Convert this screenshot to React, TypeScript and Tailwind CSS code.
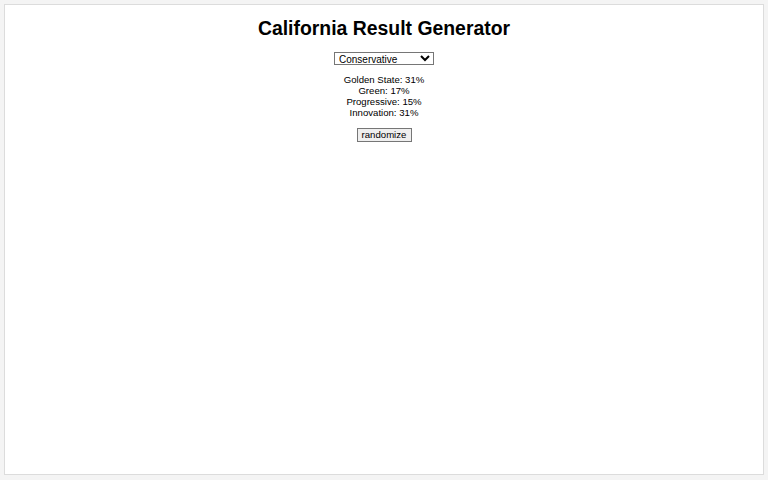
export default function App() {
  const results = [
    ["Golden State", 31],
    ["Green", 17],
    ["Progressive", 15],
    ["Innovation", 31],
  ];
  return (
    <div className="h-[480px] w-[768px] bg-[#f4f4f4] p-[4px] font-['Liberation_Sans',Arial,sans-serif]">
      <div className="flex h-[471px] flex-col items-center border border-[#dcdcdc] bg-white pt-[11px] text-black">
        <h1 className="text-[19.4px] font-bold leading-[24px]">California Result Generator</h1>
        <select
          defaultValue="Conservative"
          className="mt-[12px] h-[13px] w-[100px] border border-[#767676] bg-white px-0 text-[10px] leading-[11px]"
        >
          <option>Conservative</option>
          <option>Liberal</option>
        </select>
        <div className="mt-[9px] flex flex-col items-center text-[9.6px] leading-[11px]">
          {results.map(([name, pct]) => (
            <div key={name}>
              {name}: {pct}%
            </div>
          ))}
        </div>
        <button className="mt-[10px] h-[14px] w-[55px] border border-[#767676] bg-[#efefef] text-[9.6px] leading-[12px]">
          randomize
        </button>
      </div>
    </div>
  );
}
